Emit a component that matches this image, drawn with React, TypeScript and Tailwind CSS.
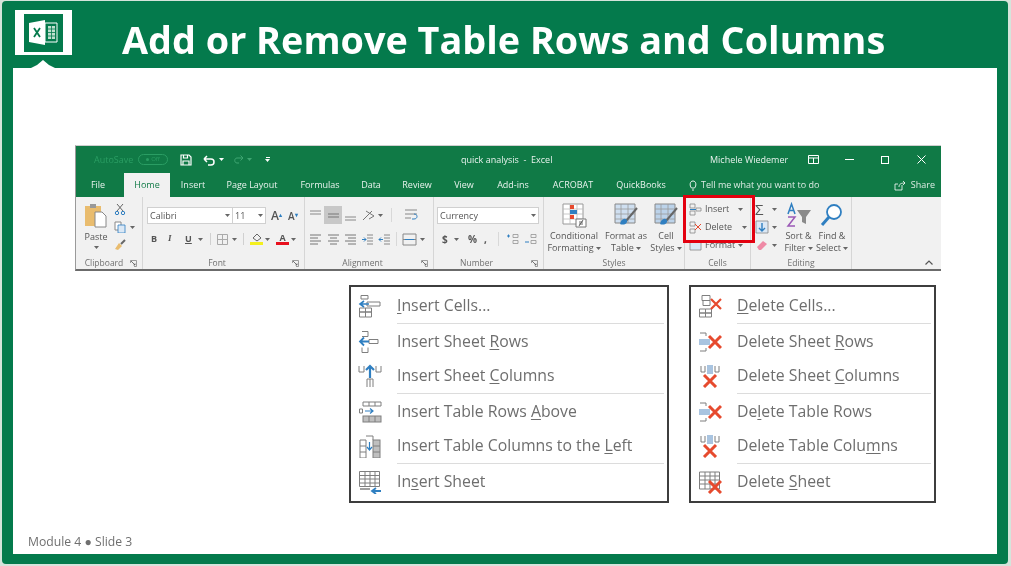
import React from "react";

const G = "#7f7f7f";
const B = "#2f7fc1";
const R = "#e64a2e";

function Ic({ w = 24, h = 24, children, className = "" }: { w?: number; h?: number; children: React.ReactNode; className?: string }) {
  return (
    <svg width={w} height={h} viewBox={`0 0 ${w} ${h}`} fill="none" className={"shrink-0 " + className}>
      {children}
    </svg>
  );
}

const Cross = ({ x, y, s = 6, sw = 3 }: { x: number; y: number; s?: number; sw?: number }) => (
  <path d={`M${x - s} ${y - s}L${x + s} ${y + s}M${x + s} ${y - s}L${x - s} ${y + s}`} stroke={R} strokeWidth={sw} />
);

const IconInsertCells = () => (
  <Ic>
    <path d="M3 1.500h7v3.500H3zM10 1.500h-7M1.500 14h6v4h-6zM7.500 14h6v4h-6zM1.500 18h6v5h-6zM7.500 18h6v5h-6z" stroke={G} />
    <path d="M9 8h13v4H9z" stroke={G} />
    <path d="M11 10H2M6 7l-4 3 4 3" stroke={B} strokeWidth="1.600" />
  </Ic>
);
const IconInsertRows = () => (
  <Ic>
    <path d="M4 1.500h6v5H4M4 17.500v5h6v-5" stroke={G} />
    <path d="M11 9.500h9v4h-9z" stroke={G} />
    <path d="M11 11.500H2M6 7.500l-4 4 4 4" stroke={B} strokeWidth="1.800" />
  </Ic>
);
const IconInsertCols = () => (
  <Ic>
    <path d="M1 2v6h5V2M18 2v6h5V2M9 23v-8h6v8M12 15v8" stroke={G} />
    <path d="M12 14V2M8 6l4-4 4 4" stroke={B} strokeWidth="2.200" />
  </Ic>
);
const IconInsertTableRows = () => (
  <Ic>
    <path d="M5 2h18v4H5zM11 2v4M17 2v4" stroke={G} />
    <path d="M1.500 9h3v4h-3z" stroke={G} />
    <path d="M7 11h8M12 8.500l3 2.500-3 2.500" stroke={B} strokeWidth="1.200" />
    <rect x="5" y="16" width="18" height="6" fill="#bfbfbf" stroke={G} />
    <path d="M11 16v6M17 16v6" stroke={G} />
  </Ic>
);
const IconInsertTableCols = () => (
  <Ic>
    <path d="M2 6h6v18H2zM2 12h6M2 18h6" stroke={G} />
    <rect x="15" y="6" width="7" height="18" fill="#bfbfbf" stroke={G} />
    <path d="M15 12h7M15 18h7M8 2h7v4" stroke={G} />
    <path d="M11.500 8v8M9 13l2.500 3 2.500-3" stroke={B} strokeWidth="1.200" />
  </Ic>
);
const IconInsertSheet = () => (
  <Ic>
    <path d="M1.500 1.500h20v15h-20zM1.500 5.500h20M1.500 9h20M1.500 13h20M7 1.500v15M12 1.500v15M17 1.500v15" stroke={G} />
    <path d="M2 19h10" stroke={G} strokeWidth="1.500" />
    <path d="M23 21H14M18 18l-4 3 4 3" stroke={B} strokeWidth="1.800" />
  </Ic>
);
const IconDeleteCells = () => (
  <Ic>
    <path d="M4 1.500h8v5H4zM5 6.500h7v5H5zM1.500 15h6v4h-6zM7.500 15h6v4h-6zM1.500 19h6v4h-6zM7.500 19h6v4h-6z" stroke={G} />
    <Cross x={18} y={10} s={5} sw={2.200} />
  </Ic>
);
const IconDeleteRows = () => (
  <Ic>
    <path d="M2 3h6v3M2 21h6v-3" stroke={G} />
    <path d="M1 9h11v6H1z" fill="#a9c4e0" />
    <Cross x={17} y={12} s={6} />
  </Ic>
);
const IconDeleteCols = () => (
  <Ic>
    <path d="M3 2v6h4V2M17 2v6h4V2" stroke={G} />
    <path d="M9 1h6v9H9z" fill="#a9c4e0" />
    <Cross x={12} y={17} s={6} />
  </Ic>
);
const IconDeleteSheet = () => (
  <Ic>
    <path d="M1.500 2h20v17h-20zM1.500 6h20M1.500 10h20M1.500 14h20M7 2v17M12 2v17M17 2v17" stroke={G} />
    <Cross x={17} y={17} s={6} />
  </Ic>
);

function MenuRow({ icon, pre, k, post, h = "h-[34px]" }: { icon: React.ReactNode; pre: string; k: string; post: string; h?: string }) {
  return (
    <div className={"flex items-center " + h}>
      <div className="w-[46px] pl-[7px] shrink-0 flex items-center">{icon}</div>
      <span className="text-[15.800px] text-[#6e6e6e] whitespace-nowrap font-['Open_Sans',sans-serif]">
        {pre}
        <u className="underline-offset-2">{k}</u>
        {post}
      </span>
    </div>
  );
}

function Divider() {
  return <div className="ml-[46px] mr-[3px] h-px bg-[#dcdcdc]" />;
}

type Row = { icon: React.ReactNode; pre: string; k: string; post: string };

function Menu({ rows, cls }: { rows: Row[]; cls: string }) {
  return (
    <div className={"flex flex-col h-[218px] border-2 border-[#3d3d3d] bg-white blur-[0.4px] " + cls}>
      <MenuRow {...rows[0]} h="h-[36px] pt-[2px]" />
      <Divider />
      <div className="h-px" />
      <MenuRow {...rows[1]} />
      <MenuRow {...rows[2]} />
      <Divider />
      <div className="h-px" />
      <MenuRow {...rows[3]} />
      <MenuRow {...rows[4]} />
      <Divider />
      <MenuRow {...rows[5]} h="h-[36px]" />
    </div>
  );
}

const insertRows: Row[] = [
  { icon: <IconInsertCells />, pre: "", k: "I", post: "nsert Cells..." },
  { icon: <IconInsertRows />, pre: "Insert Sheet ", k: "R", post: "ows" },
  { icon: <IconInsertCols />, pre: "Insert Sheet ", k: "C", post: "olumns" },
  { icon: <IconInsertTableRows />, pre: "Insert Table Rows ", k: "A", post: "bove" },
  { icon: <IconInsertTableCols />, pre: "Insert Table Columns to the ", k: "L", post: "eft" },
  { icon: <IconInsertSheet />, pre: "In", k: "s", post: "ert Sheet" },
];

const deleteRows: Row[] = [
  { icon: <IconDeleteCells />, pre: "", k: "D", post: "elete Cells..." },
  { icon: <IconDeleteRows />, pre: "Delete Sheet ", k: "R", post: "ows" },
  { icon: <IconDeleteCols />, pre: "Delete Sheet ", k: "C", post: "olumns" },
  { icon: <IconDeleteRows />, pre: "De", k: "l", post: "ete Table Rows" },
  { icon: <IconDeleteCols />, pre: "Delete Table Colu", k: "m", post: "ns" },
  { icon: <IconDeleteSheet />, pre: "Delete ", k: "S", post: "heet" },
];

const Caret = ({ c = "#666", className = "" }: { c?: string; className?: string }) => (
  <svg width="5" height="3" viewBox="0 0 5 3" className={"shrink-0 " + className}>
    <path d="M0 0h5L2.500 3z" fill={c} />
  </svg>
);

const Launcher = () => (
  <svg width="7" height="7" viewBox="0 0 7 7" className="shrink-0">
    <path d="M.5 3V.5H6.500V6.500H4" stroke="#888" fill="none" strokeWidth=".8" />
    <path d="M1 1l4 4M3.500 5H5V3.500" stroke="#555" fill="none" strokeWidth=".8" />
  </svg>
);

function Group({ w, label, launcher, pr = "", children }: { w: string; label?: string; launcher?: boolean; pr?: string; children: React.ReactNode }) {
  return (
    <div className={"flex flex-col shrink-0 pt-[2px] border-r border-[#d6d6d6] " + w}>
      <div className="h-[58px] flex">{children}</div>
      <div className={"h-[12px] flex items-center justify-center relative text-[8.500px] text-[#707070] " + pr}>
        {label}
        {launcher && (
          <span className="absolute right-[5px] top-[3px]">
            <Launcher />
          </span>
        )}
      </div>
    </div>
  );
}

const Tab = ({ w, children }: { w: string; children: string }) => (
  <div className={"flex items-center justify-center text-[9px] text-white/90 whitespace-nowrap shrink-0 " + w}>{children}</div>
);

const Lines = ({ kind }: { kind: "l" | "c" | "r" }) => {
  const s = { l: ["M1 2h11", "M1 5h8", "M1 8h11", "M1 11h8"], c: ["M1 2h11", "M3 5h7", "M1 8h11", "M3 11h7"], r: ["M1 2h11", "M4 5h8", "M1 8h11", "M4 11h8"] }[kind];
  return (
    <Ic w={13} h={13}>
      <path d={s.join("")} stroke="#777" strokeWidth="1" />
    </Ic>
  );
};

const Big = ({ icon, l1, l2, w }: { icon: React.ReactNode; l1: string; l2: string; w: string }) => (
  <div className={"flex flex-col items-center shrink-0 " + w}>
    <div className="h-[31px] flex items-center justify-center">{icon}</div>
    <div className="text-[9px] leading-[12px] text-[#555] whitespace-nowrap text-center">{l1}</div>
    <div className="text-[9px] leading-[12px] text-[#555] whitespace-nowrap flex items-center gap-[2px]">
      {l2}
      <Caret />
    </div>
  </div>
);

const TableBrush = ({ color = "#cfdff0" }: { color?: string }) => (
  <Ic w={26} h={26}>
    <path d="M2 2h20v19H2z" fill={color} stroke="#888" />
    <path d="M2 7h20M2 12h20M2 17h20M8 2v19M15 2v19" stroke="#9a9a9a" strokeWidth=".8" />
    <path d="M24 6L13 19" stroke="#666" strokeWidth="2" />
    <path d="M8 19c3-4 7-2 6 1s-5 3-7 2z" fill="#2f7fc1" />
  </Ic>
);

function Ribbon() {
  return (
    <div className="relative w-[866px] ml-[62px] font-['Open_Sans',sans-serif] border-b-2 border-[#6b6b6b] border-t border-t-[#cfcfcf] border-l border-l-[#9a9a9a]">
      <div className="blur-[0.5px]">
        <div className="bg-[#107a46]">
          {/* title bar */}
          <div className="h-[27px] flex items-center text-white/90 text-[9px]">
            <div className="w-[18px] shrink-0" />
            <span className="text-[#2a9d63] w-[44px] shrink-0">AutoSave</span>
            <div className="w-[30px] h-[11px] rounded-full border border-[#2a9d63] shrink-0 flex items-center justify-center gap-[2px] text-[6px] text-[#2a9d63]">
              <span className="w-[3px] h-[3px] rounded-full bg-[#2a9d63]" />
              Off
            </div>
            <div className="w-[12px] shrink-0" />
            <Ic w={12} h={12}>
              <path d="M1 1h8l2 2v8H1zM3.500 1v3h4V1M3 11V7h6v4" stroke="#fff" strokeWidth="1.200" />
            </Ic>
            <div className="w-[11px] shrink-0" />
            <Ic w={13} h={12}>
              <path d="M1 5h7c4 0 4 6 0 6H5M1 5l3-3M1 5l3 3" stroke="#fff" strokeWidth="1.500" />
            </Ic>
            <Caret c="#fff" className="ml-[3px]" />
            <div className="w-[9px] shrink-0" />
            <Ic w={11} h={11}>
              <path d="M10 4H4c-3 0-3 5 0 5h2M10 4L7.500 1.500M10 4L7.500 6.500" stroke="#3fa672" strokeWidth="1" />
            </Ic>
            <Caret c="#3fa672" className="ml-[3px]" />
            <div className="w-[13px] shrink-0" />
            <span className="flex flex-col items-center gap-px">
              <span className="w-[4px] h-px bg-white" />
              <Caret c="#fff" />
            </span>
            <div className="w-[191px] shrink-0" />
            <span className="whitespace-nowrap w-[249px] shrink-0">quick analysis&nbsp; -&nbsp; Excel</span>
            <span className="whitespace-nowrap w-[98px] shrink-0">Michele Wiedemer</span>
            <Ic w={11} h={9}>
              <path d="M.5.5h10v8H.5zM.5 3h10M5.500 3v5.500" stroke="#fff" />
            </Ic>
            <div className="w-[26px] shrink-0" />
            <div className="w-[9px] h-px bg-white shrink-0" />
            <div className="w-[27px] shrink-0" />
            <div className="w-[8px] h-[8px] border border-white shrink-0" />
            <div className="w-[28px] shrink-0" />
            <Ic w={9} h={9}>
              <path d="M.5.5l8 8M8.500.5l-8 8" stroke="#fff" />
            </Ic>
          </div>
          {/* tabs */}
          <div className="h-[24px] flex">
            <Tab w="w-[48px] pr-[4px]">File</Tab>
            <div className="w-[46px] shrink-0 bg-[#f1f1f1] flex items-center justify-center text-[9px] text-[#107a46]">Home</div>
            <Tab w="w-[46px]">Insert</Tab>
            <Tab w="w-[72px]">Page Layout</Tab>
            <Tab w="w-[64px]">Formulas</Tab>
            <Tab w="w-[38px]">Data</Tab>
            <Tab w="w-[54px]">Review</Tab>
            <Tab w="w-[40px]">View</Tab>
            <Tab w="w-[58px]">Add-ins</Tab>
            <Tab w="w-[62px]">ACROBAT</Tab>
            <Tab w="w-[74px]">QuickBooks</Tab>
            <div className="flex items-center gap-[4px] pl-[11px] text-[9px] text-white/85 whitespace-nowrap">
              <Ic w={8} h={11}>
                <path d="M2.500 8C.5 6 .5 1 4 1s3.500 5 1.500 7zM3 10h2" stroke="#fff" strokeWidth=".9" />
              </Ic>
              Tell me what you want to do
            </div>
            <div className="ml-auto pr-[6px] flex items-center gap-[5px] text-[9px] text-white/85">
              <Ic w={12} h={11}>
                <path d="M8 5v5H1V4h3M5 7c0-3 2-4 6-4M9 1l2 2-2 2" stroke="#fff" strokeWidth=".8" />
              </Ic>
              Share
            </div>
          </div>
        </div>
        {/* ribbon body */}
        <div className="h-[72px] bg-[#f1f1f1] flex">
          <Group w="w-[67px]" label="Clipboard" launcher pr="pr-[10px]">
            <div className="w-[38px] flex flex-col items-center pl-[2px] shrink-0">
              <div className="h-[32px] flex items-center">
                <Ic w={24} h={26}>
                  <path d="M1 4h16v20H1z" fill="#e9bc6e" />
                  <path d="M6 2h6v4H6z" fill="#999" />
                  <path d="M11 10h7l4 4v11H11z" fill="#fff" stroke="#888" />
                </Ic>
              </div>
              <div className="text-[9px] leading-[11px] text-[#555]">Paste</div>
              <Caret className="mt-[4px]" />
            </div>
            <div className="flex flex-col items-start gap-[6px] pt-[4px]">
              <Ic w={12} h={12}>
                <path d="M3 1l6 7M9 1L3 8" stroke="#666" />
                <circle cx="3" cy="10" r="1.700" stroke={B} />
                <circle cx="9" cy="10" r="1.700" stroke={B} />
              </Ic>
              <div className="flex items-center gap-[4px]">
                <Ic w={12} h={12}>
                  <path d="M1 1h6v8H1z" fill="#fff" stroke="#888" />
                  <path d="M4 4h7v8H4z" fill="#dbe8f5" stroke={B} strokeWidth=".8" />
                </Ic>
                <Caret />
              </div>
              <Ic w={12} h={12}>
                <path d="M7 5l4-4" stroke="#666" strokeWidth="2" />
                <path d="M1 10l4-6 3 3-4 4z" fill="#e9bc6e" />
              </Ic>
            </div>
          </Group>

          <Group w="w-[162px]" label="Font" launcher pr="pr-[13px]">
            <div className="flex flex-col pl-[4px] pt-[8px] gap-[7px]">
              <div className="flex items-center">
                <div className="w-[86px] h-[17px] bg-white border border-[#d0d0d0] flex items-center justify-between px-[2px] text-[9px] text-[#555]">
                  Calibri
                  <Caret />
                </div>
                <div className="w-[33px] h-[17px] bg-white border border-[#d0d0d0] border-l-0 flex items-center justify-between px-[2px] text-[9px] text-[#555]">
                  11
                  <Caret />
                </div>
                <span className="ml-[5px] text-[12px] leading-[14px] text-[#555] font-semibold w-[17px]">
                  A<sup className="text-[6px] text-[#2f7fc1]">▴</sup>
                </span>
                <span className="text-[10px] leading-[14px] text-[#555] font-semibold">
                  A<sup className="text-[6px] text-[#2f7fc1]">▾</sup>
                </span>
              </div>
              <div className="flex items-center h-[16px] pl-[4px] text-[9px] text-[#555] font-bold">
                <span className="w-[17px]">B</span>
                <span className="w-[17px] italic font-['Liberation_Serif',serif]">I</span>
                <span className="w-[13px] underline">U</span>
                <Caret />
                <span className="w-px h-[12px] bg-[#d0d0d0] ml-[7px] mr-[6px]" />
                <Ic w={11} h={11}>
                  <path d="M.5.5h10v10H.5zM5.500.5v10M.5 5.500h10" stroke="#aaa" />
                </Ic>
                <Caret className="ml-[4px]" />
                <span className="w-px h-[12px] bg-[#d0d0d0] ml-[6px] mr-[6px]" />
                <div className="flex flex-col items-center w-[13px]">
                  <Ic w={11} h={9}>
                    <path d="M2 5l4-4 4 4-4 3z" stroke="#666" />
                  </Ic>
                  <div className="w-[13px] h-[3px] bg-[#f4f01e]" />
                </div>
                <Caret className="ml-[2px]" />
                <div className="flex flex-col items-center w-[13px] ml-[6px] leading-[9px]">
                  A<div className="w-[13px] h-[3px] bg-[#e8101e]" />
                </div>
                <Caret className="ml-[2px]" />
              </div>
            </div>
          </Group>

          <Group w="w-[129px]" label="Alignment" launcher pr="pr-[13px]">
            <div className="flex flex-col pl-[2px] pt-[6px] gap-[6px]">
              <div className="flex items-center h-[20px]">
                <div className="w-[17px] flex justify-center">
                  <Ic w={13} h={13}>
                    <path d="M1 2h11M1 5h11" stroke="#888" />
                  </Ic>
                </div>
                <div className="w-[18px] h-[18px] bg-[#c8c8c8] flex justify-center items-center">
                  <Ic w={13} h={13}>
                    <path d="M1 5h11M1 8h11" stroke="#777" />
                  </Ic>
                </div>
                <div className="w-[17px] flex justify-center">
                  <Ic w={13} h={13}>
                    <path d="M1 8h11M1 11h11" stroke="#888" />
                  </Ic>
                </div>
                <Ic w={14} h={14} className="ml-[2px]">
                  <path d="M2 12L11 3M5 3l8 5-5 3" stroke="#777" />
                </Ic>
                <Caret className="ml-[3px]" />
                <span className="w-px h-[14px] bg-[#d8d8d8] ml-[8px] mr-[12px]" />
                <Ic w={15} h={15}>
                  <path d="M1 2h12M1 6h12M1 10h6" stroke="#888" />
                  <path d="M10 6c4 0 4 5 0 5H8" stroke={B} />
                </Ic>
              </div>
              <div className="flex items-center h-[16px]">
                <div className="w-[17px] flex justify-center"><Lines kind="l" /></div>
                <div className="w-[18px] flex justify-center"><Lines kind="c" /></div>
                <div className="w-[17px] flex justify-center"><Lines kind="r" /></div>
                <div className="w-[16px] flex justify-center">
                  <Ic w={13} h={13}>
                    <path d="M6 2h6M6 5h6M6 8h6M6 11h6" stroke="#888" />
                    <path d="M1 6.500h4M3 4.500l2 2-2 2" stroke={B} />
                  </Ic>
                </div>
                <div className="w-[18px] flex justify-center">
                  <Ic w={13} h={13}>
                    <path d="M6 2h6M6 5h6M6 8h6M6 11h6" stroke="#888" />
                    <path d="M5 6.500H1M3 4.500l-2 2 2 2" stroke={B} />
                  </Ic>
                </div>
                <span className="w-px h-[14px] bg-[#d8d8d8] ml-[3px] mr-[5px]" />
                <Ic w={15} h={13}>
                  <path d="M1 1h13v11H1zM1 6.500h13" stroke="#888" />
                  <path d="M3 6.500h9" stroke={B} />
                </Ic>
                <Caret className="ml-[3px]" />
              </div>
            </div>
          </Group>

          <Group w="w-[110px]" label="Number" launcher pr="pr-[24px]">
            <div className="flex flex-col pl-[3px] pt-[8px] gap-[7px]">
              <div className="w-[102px] h-[17px] bg-white border border-[#d0d0d0] flex items-center justify-between px-[2px] text-[9px] text-[#555]">
                Currency
                <Caret />
              </div>
              <div className="flex items-center h-[16px] pl-[5px] text-[10px] text-[#555] font-bold">
                <span className="w-[12px]">$</span>
                <Caret />
                <span className="w-[9px]" />
                <span className="w-[16px]">%</span>
                <span className="w-[14px]">,</span>
                <span className="w-px h-[14px] bg-[#d8d8d8] mr-[7px]" />
                <Ic w={14} h={12}>
                  <path d="M1 3h3M2.500 1.500v3" stroke={B} />
                  <path d="M7 1.500h5v3H7zM7 7.500h5v3H7z" stroke="#888" strokeWidth=".7" />
                </Ic>
                <span className="w-[4px]" />
                <Ic w={14} h={12}>
                  <path d="M1 9h4" stroke={B} />
                  <path d="M7 1.500h5v3H7zM7 7.500h5v3H7z" stroke="#888" strokeWidth=".7" />
                </Ic>
              </div>
            </div>
          </Group>

          <Group w="w-[141px]" label="Styles">
            <Big
              w="w-[60px]"
              l1="Conditional"
              l2="Formatting"
              icon={
                <Ic w={26} h={26}>
                  <path d="M2 2h20v20H2z" fill="#fff" stroke="#999" />
                  <path d="M9 2v20M16 2v20M2 7h20M2 12h20M2 17h20" stroke="#bbb" strokeWidth=".8" />
                  <path d="M9 3h4v4H9z" fill={R} />
                  <path d="M9 8h7v4H9z" fill={B} />
                  <path d="M9 13h4v4H9z" fill={R} />
                  <path d="M15 17h10v8H15z" fill="#fff" stroke="#777" />
                  <path d="M18 20h4M18 22h4M22 18l-4 6" stroke="#444" strokeWidth=".8" />
                </Ic>
              }
            />
            <Big w="w-[44px]" l1="Format as" l2="Table" icon={<TableBrush />} />
            <Big w="w-[36px]" l1="Cell" l2="Styles" icon={<TableBrush color="#bcd3ea" />} />
          </Group>

          <Group w="w-[66px]" label="Cells">
            <div className="flex flex-col pl-[4px] pt-[1px] text-[9px] text-[#555]">
              <div className="h-[18px] flex items-center gap-[3px]">
                <Ic w={13} h={13}>
                  <path d="M1 1h5v4H1zM1 8h5v4H1zM7 5h5v3H7z" stroke="#888" strokeWidth=".8" />
                  <path d="M7 6.500H1" stroke={B} />
                </Ic>
                <span className="w-[30px]">Insert</span>
                <Caret />
              </div>
              <div className="h-[18px] flex items-center gap-[3px]">
                <Ic w={13} h={13}>
                  <path d="M1 1h5v4H1zM1 8h5v4H1z" stroke="#888" strokeWidth=".8" />
                  <Cross x={9} y={6} s={3} sw={1} />
                </Ic>
                <span className="w-[34px]">Delete</span>
                <Caret />
              </div>
              <div className="h-[18px] flex items-center gap-[3px]">
                <Ic w={13} h={13}>
                  <path d="M1 3h11v8H1z" fill="#dbe8f5" stroke="#888" strokeWidth=".8" />
                </Ic>
                <span>Format</span>
                <Caret />
              </div>
            </div>
          </Group>

          <Group w="w-[101px]" label="Editing">
            <div className="flex flex-col w-[30px] pl-[4px] pt-[1px]">
              <div className="h-[18px] flex items-center gap-[3px]">
                <span className="text-[15px] leading-none text-[#555] w-[14px]">Σ</span>
                <Caret />
              </div>
              <div className="h-[18px] flex items-center gap-[3px]">
                <Ic w={14} h={14}>
                  <path d="M1 1h12v12H1z" fill="#dbe8f5" stroke="#888" strokeWidth=".8" />
                  <path d="M7 3v8M4 8l3 3 3-3" stroke={B} strokeWidth="1.400" />
                </Ic>
                <Caret />
              </div>
              <div className="h-[18px] flex items-center gap-[3px]">
                <Ic w={14} h={14}>
                  <path d="M2 9l6-6 4 3-6 6H4z" fill="#ef8aa6" />
                </Ic>
                <Caret />
              </div>
            </div>
            <Big
              w="w-[35px]"
              l1="Sort &"
              l2="Filter"
              icon={
                <Ic w={26} h={26}>
                  <path d="M2 12L5.500 2 9 12M3.500 8.500h4" stroke={B} strokeWidth="1.500" />
                  <path d="M2 15h7l-7 9h7" stroke="#9b59b6" strokeWidth="1.500" />
                  <path d="M11 8h14l-5 7v7l-4-2v-5z" fill="#8a8a8a" />
                </Ic>
              }
            />
            <Big
              w="w-[32px]"
              l1="Find &"
              l2="Select"
              icon={
                <Ic w={24} h={26}>
                  <circle cx="14" cy="10" r="7" stroke={B} strokeWidth="1.800" fill="#fff" />
                  <path d="M9 15l-7 8" stroke={B} strokeWidth="3" />
                </Ic>
              }
            />
          </Group>
          <div className="flex-1 flex items-end justify-end pr-[8px] pb-[4px]">
            <svg width="8" height="5" viewBox="0 0 8 5">
              <path d="M.5 4.500L4 1l3.500 3.500" stroke="#555" fill="none" strokeWidth="1.200" />
            </svg>
          </div>
        </div>
      </div>
      <div className="absolute left-[607px] top-[49px] w-[72px] h-[48px] border-[3.500px] border-[#e3000f]" />
    </div>
  );
}

export default function App() {
  return (
    <div className="w-[1011px] h-[566px] bg-[#d5e4db] pl-[2px] pr-[3px] pt-px pb-[2px] overflow-hidden">
      <div className="h-full bg-[#047a4c] rounded-[4px] flex flex-col px-[11px] pb-[10px]">
        <div className="h-[67px] flex items-start shrink-0 relative">
          <div className="mt-[9px] ml-[2px] w-[57px] h-[45px] bg-white flex items-center justify-center">
            <div className="w-[39px] h-[38px] bg-[#047a4c] flex items-center justify-center">
              <svg width="29" height="25" viewBox="0 0 29 25" fill="none">
                <path d="M0 3L16 0v25L0 22z" fill="#fff" />
                <path d="M5 8l6 9M11 8l-6 9" stroke="#047a4c" strokeWidth="1.800" />
                <path d="M16 3h12v19H16z" fill="#047a4c" stroke="#fff" />
                <path d="M19 6h7v13h-7z" fill="#bfe0cf" />
                <path d="M19 9h7M19 12.500h7M19 16h7M22.500 6v13" stroke="#047a4c" strokeWidth=".8" />
              </svg>
            </div>
          </div>
          <h1 className="ml-[50px] mt-[13px] text-[37.800px] leading-[52px] font-bold text-white whitespace-nowrap blur-[0.3px] font-['Open_Sans',sans-serif]">
            Add or Remove Table Rows and Columns
          </h1>
          <svg width="28" height="9" viewBox="0 0 28 9" className="absolute left-[16px] top-[59px]">
            <path d="M0 9L8 5 14 0l6 5 8 4z" fill="#fff" />
          </svg>
        </div>
        <div className="flex-1 bg-white flex flex-col">
          <div className="h-[77px] shrink-0" />
          <Ribbon />
          <div className="flex h-[218px] mt-[14px] ml-[336px] gap-[20px]">
            <Menu rows={insertRows} cls="w-[320px]" />
            <Menu rows={deleteRows} cls="w-[247px]" />
          </div>
          <div className="mt-auto pl-[15px] pb-[3px] text-[12.200px] text-[#6f6f6f] blur-[0.3px] font-['Open_Sans',sans-serif]">Module 4 ● Slide 3</div>
        </div>
      </div>
    </div>
  );
}
